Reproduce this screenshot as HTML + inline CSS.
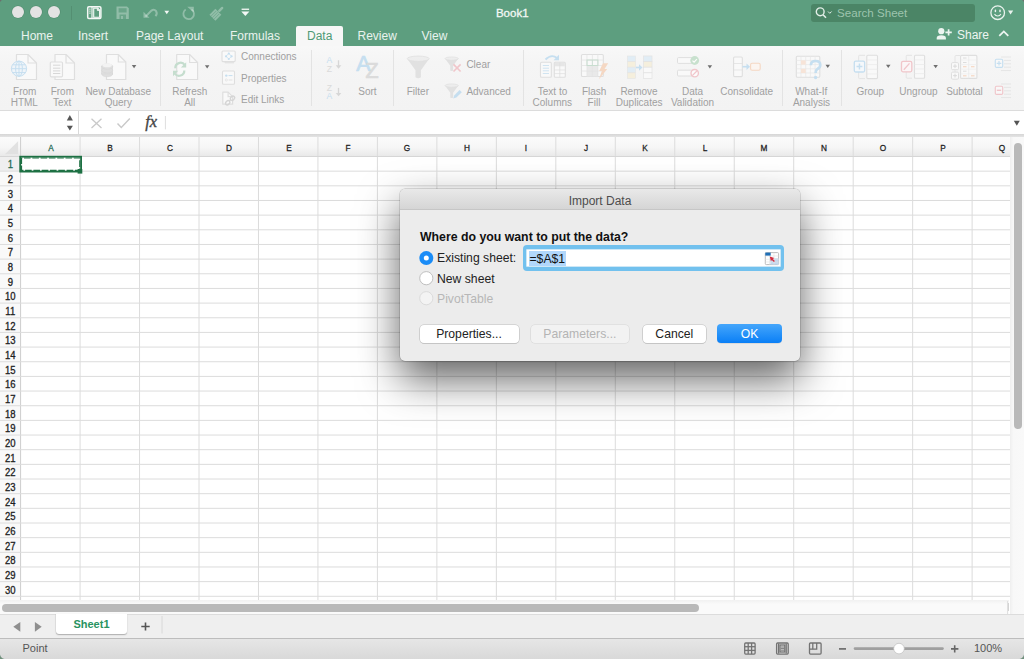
<!DOCTYPE html><html><head><meta charset="utf-8"><style>
*{box-sizing:border-box;margin:0;padding:0}
html,body{width:1024px;height:659px;overflow:hidden;background:#fff;font-family:"Liberation Sans",sans-serif}
.a{position:absolute;white-space:nowrap}
.tab{position:absolute;top:28.5px;font-size:12px;color:#e9f3ee;line-height:14px}
.lbl{position:absolute;font-size:10px;color:#a0a0a0;line-height:11px;text-align:center;white-space:nowrap}
.sep{position:absolute;top:50px;width:1px;height:56px;background:#e2e2e2}
</style></head><body>
<div class="a" style="left:0;top:0;width:1024px;height:46px;background:#5d9e7f"></div>
<svg class="a" style="left:0;top:0" width="1024" height="4"><path d="M0 0H2.2Q0.6 0.6 0 2.2Z" fill="#6d6d6d"/><path d="M1024 0H1021.8Q1023.4 0.6 1024 2.2Z" fill="#6d6d6d"/></svg>
<div class="a" style="left:70.6px;top:6px;width:1px;height:14px;background:#548f72"></div>
<div class="a" style="left:11.5px;top:5.7px;width:12px;height:12px;border-radius:50%;background:#e3e3e3;box-shadow:0 0 0 0.5px #4f8a6c"></div>
<div class="a" style="left:29.5px;top:5.7px;width:12px;height:12px;border-radius:50%;background:#e3e3e3;box-shadow:0 0 0 0.5px #4f8a6c"></div>
<div class="a" style="left:48px;top:5.7px;width:12px;height:12px;border-radius:50%;background:#e3e3e3;box-shadow:0 0 0 0.5px #4f8a6c"></div>
<div class="tab" style="left:21px">Home</div>
<div class="tab" style="left:78px">Insert</div>
<div class="tab" style="left:136px">Page Layout</div>
<div class="tab" style="left:230px">Formulas</div>
<div class="tab" style="left:357.5px">Review</div>
<div class="tab" style="left:421.5px">View</div>
<div class="a" style="left:296px;top:25.5px;width:47px;height:21px;background:#f7f7f7;border-radius:2px 2px 0 0"></div>
<div class="tab" style="left:307px;color:#4f9b76">Data</div>
<div class="a" style="left:0;top:6.3px;width:1024px;padding-left:0.5px;text-align:center;font-size:11.5px;color:#f3f8f5;line-height:14px;-webkit-text-stroke:0.3px #f3f8f5">Book1</div>
<div class="a" style="left:0;top:46px;width:1024px;height:65px;background:linear-gradient(#f8f8f8,#f5f5f5 25%,#f3f3f3);border-bottom:1px solid #dcdcdc"></div>
<svg class="a" style="left:0;top:0;opacity:0.78" width="1024" height="110"><path d="M16.5 54.5H28.0L36.5 63.0V79.5H16.5Z" fill="#fbfbfb" stroke="#d9d9d9" stroke-width="1.2" stroke-linejoin="round"/><path d="M28.0 54.5V63.0H36.5" fill="none" stroke="#d9d9d9" stroke-width="1.2"/><g fill="none" stroke="#b9d9ef" stroke-width="1"><circle cx="19" cy="68.7" r="7.6" fill="#eef5fb"/><ellipse cx="19" cy="68.7" rx="3.4" ry="7.6"/><line x1="19" y1="61" x2="19" y2="76.3"/><line x1="11.4" y1="68.7" x2="26.6" y2="68.7"/><line x1="12.6" y1="64.8" x2="25.4" y2="64.8"/><line x1="12.6" y1="72.6" x2="25.4" y2="72.6"/></g><path d="M55 54.5H66.0L74.5 63.0V79.5H55Z" fill="#fbfbfb" stroke="#d9d9d9" stroke-width="1.2" stroke-linejoin="round"/><path d="M66.0 54.5V63.0H74.5" fill="none" stroke="#d9d9d9" stroke-width="1.2"/><rect x="50.3" y="62" width="12.2" height="14.8" rx="1" fill="#fbfbfb" stroke="#d9d9d9" stroke-width="1.2"/><line x1="53" y1="65.2" x2="60.3" y2="65.2" stroke="#c9c9c9" stroke-width="0.9"/><line x1="53" y1="68.2" x2="60.3" y2="68.2" stroke="#c9c9c9" stroke-width="0.9"/><line x1="53" y1="70.9" x2="60.3" y2="70.9" stroke="#c9c9c9" stroke-width="0.9"/><line x1="53" y1="73.5" x2="60.3" y2="73.5" stroke="#c9c9c9" stroke-width="0.9"/><path d="M106.5 54.5H118.3L125.8 62.0V79.5H106.5Z" fill="#fbfbfb" stroke="#d9d9d9" stroke-width="1.2" stroke-linejoin="round"/><path d="M118.3 54.5V62.0H125.8" fill="none" stroke="#d9d9d9" stroke-width="1.2"/><g fill="#dadada" stroke="#cfcfcf" stroke-width="0.6"><ellipse cx="107.2" cy="74" rx="5.5" ry="2.7"/><rect x="101.7" y="66" width="11" height="8"/><ellipse cx="107.2" cy="70.3" rx="5.5" ry="2.7"/><ellipse cx="107.2" cy="66.6" rx="5.5" ry="2.7"/></g><ellipse cx="107.2" cy="65.2" rx="4.6" ry="2" fill="#f3f3f3"/><path d="M131.8 65h4.5l-2.25 3.2z" fill="#4a4a4a"/><path d="M176.7 54.5H189.6L197.6 62.5V79.5H176.7Z" fill="#fbfbfb" stroke="#d9d9d9" stroke-width="1.2" stroke-linejoin="round"/><path d="M189.6 54.5V62.5H197.6" fill="none" stroke="#d9d9d9" stroke-width="1.2"/><g fill="none" stroke="#b8d7c4" stroke-width="2.2"><path d="M175.3 68.3a5.2 5.2 0 0 1 9.5-3.2"/><path d="M184.3 70.5a5.2 5.2 0 0 1-9.5 3"/></g><path d="M186.2 62.2v5.4h-5.3z" fill="#b8d7c4"/><path d="M173 76.2v-5.4h5.3z" fill="#b8d7c4"/><path d="M204.9 65.3h4.5l-2.25 3.2z" fill="#4a4a4a"/><rect x="222" y="51" width="13.2" height="10.6" rx="1" fill="#fbfbfb" stroke="#d9d9d9" stroke-width="1.1"/><path d="M225 61.6v1.2h9" fill="none" stroke="#d9d9d9" stroke-width="1"/><g fill="#b9d9ef"><circle cx="228.8" cy="53.5" r="1.1"/><circle cx="228.8" cy="59" r="1.1"/><circle cx="226" cy="56.3" r="1.1"/><circle cx="231.6" cy="56.3" r="1.1"/></g><path d="M226 56.3l2.8-2.8 2.8 2.8-2.8 2.7z" fill="none" stroke="#b9d9ef" stroke-width="0.8"/><rect x="222.5" y="71" width="12" height="13.2" rx="1" fill="#fbfbfb" stroke="#d9d9d9" stroke-width="1.1"/><circle cx="226.3" cy="75.6" r="1.2" fill="#b9d9ef"/><line x1="228.5" y1="75.6" x2="232.5" y2="75.6" stroke="#b9d9ef" stroke-width="1"/><circle cx="226.3" cy="80" r="1.1" fill="none" stroke="#dadada" stroke-width="0.7"/><line x1="228.5" y1="80" x2="232.5" y2="80" stroke="#dddddd" stroke-width="1"/><path d="M222.8 92.2H228.1L232.6 96.7V104.2H222.8Z" fill="#fbfbfb" stroke="#d9d9d9" stroke-width="1.2" stroke-linejoin="round"/><path d="M228.1 92.2V96.7H232.6" fill="none" stroke="#d9d9d9" stroke-width="1.2"/><g fill="none" stroke="#cdcdcd" stroke-width="1.3"><ellipse cx="227.7" cy="102.8" rx="2.4" ry="1.8" transform="rotate(-45 227.7 102.8)"/><ellipse cx="232.5" cy="98.2" rx="2.4" ry="1.8" transform="rotate(-45 232.5 98.2)"/><line x1="229" y1="101.4" x2="231" y2="99.5"/></g><text x="326.5" y="63.2" font-size="8.6" fill="#b9d9ef" font-family="Liberation Sans">A</text><text x="326.8" y="71.9" font-size="8.6" fill="#d3d3d3" font-family="Liberation Sans">Z</text><text x="326.8" y="90.8" font-size="8.6" fill="#d3d3d3" font-family="Liberation Sans">Z</text><text x="326.5" y="99.2" font-size="8.6" fill="#b9d9ef" font-family="Liberation Sans">A</text><line x1="338.5" y1="60.3" x2="338.5" y2="67.3" stroke="#cfcfcf" stroke-width="1.3"/><path d="M335.8 65.3h5.5l-2.75 3.4z" fill="#cfcfcf"/><line x1="338.5" y1="87.9" x2="338.5" y2="94.9" stroke="#cfcfcf" stroke-width="1.3"/><path d="M335.8 92.9h5.5l-2.75 3.4z" fill="#cfcfcf"/><text x="356.3" y="71.4" font-size="21.5" fill="#b9d9ef" stroke="#b9d9ef" stroke-width="0.7" font-family="Liberation Sans">A</text><text x="365.6" y="77.6" font-size="21.5" fill="#d4d4d4" stroke="#d4d4d4" stroke-width="0.7" font-family="Liberation Sans">Z</text><path d="M407.2 58.7L415.5 70.2V77.2Q418.2 79.5 420.9 77.2V70.2L429.2 58.7Z" fill="#dcdcdc"/><ellipse cx="418.2" cy="58.7" rx="11" ry="2.6" fill="#ececec" stroke="#dadada" stroke-width="0.8"/><path d="M445 58.6L450.3 65.7V70.5Q451.7 71.5 453.1 70.5V65.7L458.4 58.6Z" fill="#dcdcdc"/><ellipse cx="451.7" cy="58.6" rx="6.7" ry="1.6" fill="#ececec" stroke="#dadada" stroke-width="0.7"/><g stroke="#f0b9bf" stroke-width="1.6"><line x1="453.5" y1="64.4" x2="460.6" y2="71.5"/><line x1="460.6" y1="64.4" x2="453.5" y2="71.5"/></g><path d="M445 85.6L450.3 92.7V97.5Q451.7 98.5 453.1 97.5V92.7L458.4 85.6Z" fill="#dcdcdc"/><ellipse cx="451.7" cy="85.6" rx="6.7" ry="1.6" fill="#ececec" stroke="#dadada" stroke-width="0.7"/><path d="M453.2 98.6l1-3.2 5.4-5.4 2.2 2.2-5.4 5.4z" fill="#b9d9ef"/><rect x="540.5" y="62.3" width="10.8" height="15" rx="1" fill="#fbfbfb" stroke="#d9d9d9" stroke-width="1.1"/><line x1="542.8" y1="65.5" x2="549" y2="65.5" stroke="#b9d9ef" stroke-width="0.8"/><line x1="542.8" y1="68.2" x2="549" y2="68.2" stroke="#b9d9ef" stroke-width="0.8"/><line x1="542.8" y1="70.8" x2="549" y2="70.8" stroke="#b9d9ef" stroke-width="0.8"/><line x1="542.8" y1="73.5" x2="549" y2="73.5" stroke="#b9d9ef" stroke-width="0.8"/><rect x="554.3" y="62.3" width="11" height="15" rx="1" fill="#fbfbfb" stroke="#d9d9d9" stroke-width="1.1"/><rect x="554.8" y="62.8" width="10" height="3.5" fill="#e2e2e2"/><line x1="559.8" y1="62.3" x2="559.8" y2="77.3" stroke="#d9d9d9" stroke-width="0.8"/><line x1="554.3" y1="70" x2="565.3" y2="70" stroke="#d9d9d9" stroke-width="0.7"/><line x1="554.3" y1="73.6" x2="565.3" y2="73.6" stroke="#d9d9d9" stroke-width="0.7"/><path d="M545.5 59.5Q551.5 53.5 557 58" fill="none" stroke="#b9d9ef" stroke-width="1.8"/><path d="M559 54.8V60.3H553.6z" fill="#b9d9ef"/><rect x="581.5" y="54.5" width="21.8" height="22" rx="1" fill="#fbfbfb" stroke="#d9d9d9" stroke-width="1.1"/><rect x="587" y="66" width="11" height="10.5" fill="#e6e6e6"/><line x1="586.95" y1="54.5" x2="586.95" y2="76.5" stroke="#e0e0e0" stroke-width="0.8"/><line x1="581.5" y1="60.00" x2="603.3" y2="60.00" stroke="#e0e0e0" stroke-width="0.8"/><line x1="592.40" y1="54.5" x2="592.40" y2="76.5" stroke="#e0e0e0" stroke-width="0.8"/><line x1="581.5" y1="65.50" x2="603.3" y2="65.50" stroke="#e0e0e0" stroke-width="0.8"/><line x1="597.85" y1="54.5" x2="597.85" y2="76.5" stroke="#e0e0e0" stroke-width="0.8"/><line x1="581.5" y1="71.00" x2="603.3" y2="71.00" stroke="#e0e0e0" stroke-width="0.8"/><rect x="587" y="60" width="10.9" height="5.5" fill="none" stroke="#bcd8c6" stroke-width="1"/><line x1="592.4" y1="60" x2="592.4" y2="65.5" stroke="#bcd8c6" stroke-width="0.8"/><path d="M603 63.2H608.2L604.5 69H607.2L599 79.2L601.8 71H599.2Z" fill="#f6d0b6"/><rect x="627.4" y="56.0" width="8" height="5.6" fill="#dcebf6" stroke="#e0e0e0" stroke-width="0.6"/><rect x="627.4" y="61.6" width="8" height="5.6" fill="#f6eed7" stroke="#e0e0e0" stroke-width="0.6"/><rect x="627.4" y="67.2" width="8" height="5.6" fill="#dcebf6" stroke="#e0e0e0" stroke-width="0.6"/><rect x="627.4" y="72.8" width="8" height="5.6" fill="#f6eed7" stroke="#e0e0e0" stroke-width="0.6"/><rect x="643.5" y="56.0" width="8.5" height="5.6" fill="#dcebf6" stroke="#dedede" stroke-width="0.7"/><rect x="643.5" y="61.6" width="8.5" height="5.6" fill="#f6eed7" stroke="#dedede" stroke-width="0.7"/><rect x="643.5" y="67.2" width="8.5" height="5.6" fill="#fbfbfb" stroke="#dedede" stroke-width="0.7"/><rect x="643.5" y="72.8" width="8.5" height="5.6" fill="#fbfbfb" stroke="#dedede" stroke-width="0.7"/><path d="M636 67.5H639.5" stroke="#b9d9ef" stroke-width="1.6"/><path d="M639 64.2L642.5 67.5L639 70.8Z" fill="#b9d9ef"/><rect x="677.5" y="57.6" width="16.5" height="5.8" rx="1" fill="#fbfbfb" stroke="#d9d9d9" stroke-width="1"/><rect x="677.5" y="70.2" width="16.5" height="5.8" rx="1" fill="#fbfbfb" stroke="#d9d9d9" stroke-width="1"/><circle cx="694.7" cy="60.5" r="4.4" fill="#bcdcc4"/><path d="M692.5 60.6l1.6 1.6 2.8-3" fill="none" stroke="#fff" stroke-width="1.2"/><circle cx="694.7" cy="73.2" r="3.7" fill="#fff" stroke="#f0b9bf" stroke-width="1.4"/><line x1="692.3" y1="75.6" x2="697.1" y2="70.8" stroke="#f0b9bf" stroke-width="1.3"/><path d="M707.6 65.3h4.5l-2.25 3.2z" fill="#4a4a4a"/><rect x="733.6" y="57" width="8.7" height="19.6" rx="1" fill="#fbfbfb" stroke="#d9d9d9" stroke-width="1.1"/><line x1="733.6" y1="63.5" x2="742.3" y2="63.5" stroke="#d9d9d9" stroke-width="0.7"/><line x1="733.6" y1="70" x2="742.3" y2="70" stroke="#d9d9d9" stroke-width="0.7"/><path d="M742.5 66.7H747" stroke="#b9d9ef" stroke-width="1.6"/><path d="M746.5 63.5L750 66.7L746.5 70Z" fill="#b9d9ef"/><rect x="750.6" y="63.3" width="9.6" height="7" rx="1.5" fill="#fdf6f0" stroke="#f6d0b6" stroke-width="1.1"/><rect x="796.3" y="56.2" width="23.5" height="21" rx="1" fill="#fbfbfb" stroke="#d9d9d9" stroke-width="1.1"/><line x1="801.0" y1="56.2" x2="801.0" y2="77.2" stroke="#e4e4e4" stroke-width="0.7"/><line x1="796.3" y1="60.4" x2="819.8" y2="60.4" stroke="#e4e4e4" stroke-width="0.7"/><line x1="805.7" y1="56.2" x2="805.7" y2="77.2" stroke="#e4e4e4" stroke-width="0.7"/><line x1="796.3" y1="64.6" x2="819.8" y2="64.6" stroke="#e4e4e4" stroke-width="0.7"/><line x1="810.4" y1="56.2" x2="810.4" y2="77.2" stroke="#e4e4e4" stroke-width="0.7"/><line x1="796.3" y1="68.8" x2="819.8" y2="68.8" stroke="#e4e4e4" stroke-width="0.7"/><line x1="815.1" y1="56.2" x2="815.1" y2="77.2" stroke="#e4e4e4" stroke-width="0.7"/><line x1="796.3" y1="73.0" x2="819.8" y2="73.0" stroke="#e4e4e4" stroke-width="0.7"/><rect x="801" y="60.4" width="4.7" height="4.2" fill="#f8e0d0"/><rect x="801" y="68.8" width="4.7" height="4.2" fill="#f8e0d0"/><path d="M810.8 65.2Q811 61 815.5 61Q820.3 61 820.3 65Q820.3 67.6 817.4 69Q815.6 70 815.6 73" fill="none" stroke="#b9d9ef" stroke-width="2.6"/><circle cx="815.6" cy="77.5" r="1.7" fill="#b9d9ef"/><path d="M825.5 64.8h4.5l-2.25 3.2z" fill="#4a4a4a"/><path d="M865 55.3H859.5Q858.6 55.3 858.6 56.3V77.6Q858.6 78.6 859.5 78.6H865" fill="none" stroke="#e0e0e0" stroke-width="1"/><rect x="866.8" y="55.3" width="10.7" height="23.3" rx="1" fill="#fbfbfb" stroke="#d9d9d9" stroke-width="1.1"/><line x1="866.8" y1="60.0" x2="877.5" y2="60.0" stroke="#e6e6e6" stroke-width="0.7"/><line x1="866.8" y1="64.6" x2="877.5" y2="64.6" stroke="#e6e6e6" stroke-width="0.7"/><line x1="866.8" y1="69.3" x2="877.5" y2="69.3" stroke="#e6e6e6" stroke-width="0.7"/><line x1="866.8" y1="73.9" x2="877.5" y2="73.9" stroke="#e6e6e6" stroke-width="0.7"/><rect x="854.3" y="61.1" width="10.3" height="10.9" rx="1.5" fill="#f6fafd" stroke="#b9d9ef" stroke-width="1.3"/><path d="M859.45 63.6V69.5M856.5 66.55H862.4" stroke="#b9d9ef" stroke-width="1.5"/><path d="M886 64.8h4.5l-2.25 3.2z" fill="#4a4a4a"/><path d="M912 55.3H907Q906.2 55.3 906.2 56.3V77.2Q906.2 78.2 907 78.2H912" fill="none" stroke="#e0e0e0" stroke-width="1"/><rect x="914.5" y="55.3" width="10.1" height="22.9" rx="1" fill="#fbfbfb" stroke="#d9d9d9" stroke-width="1.1"/><line x1="914.5" y1="59.9" x2="924.6" y2="59.9" stroke="#e6e6e6" stroke-width="0.7"/><line x1="914.5" y1="64.5" x2="924.6" y2="64.5" stroke="#e6e6e6" stroke-width="0.7"/><line x1="914.5" y1="69.0" x2="924.6" y2="69.0" stroke="#e6e6e6" stroke-width="0.7"/><line x1="914.5" y1="73.6" x2="924.6" y2="73.6" stroke="#e6e6e6" stroke-width="0.7"/><rect x="901.5" y="61.4" width="10.3" height="10.4" rx="1.5" fill="#fdf7f8" stroke="#f0b9bf" stroke-width="1.3"/><line x1="903.8" y1="69.8" x2="909.5" y2="63.4" stroke="#f0b9bf" stroke-width="1.3"/><path d="M933.4 65h4.5l-2.25 3.2z" fill="#4a4a4a"/><path d="M960 55.5H956Q955 55.5 955 56.5V62.5M955 70V72" fill="none" stroke="#e0e0e0" stroke-width="1"/><rect x="960.6" y="55.4" width="16.3" height="23" rx="1" fill="#fbfbfb" stroke="#d9d9d9" stroke-width="1.1"/><line x1="968.7" y1="55.4" x2="968.7" y2="78.4" stroke="#e4e4e4" stroke-width="0.7"/><line x1="960.6" y1="60.0" x2="976.9" y2="60.0" stroke="#e8e8e8" stroke-width="0.6"/><line x1="960.6" y1="64.6" x2="976.9" y2="64.6" stroke="#e8e8e8" stroke-width="0.6"/><line x1="960.6" y1="69.2" x2="976.9" y2="69.2" stroke="#e8e8e8" stroke-width="0.6"/><line x1="960.6" y1="73.8" x2="976.9" y2="73.8" stroke="#e8e8e8" stroke-width="0.6"/><line x1="963" y1="58" x2="966.5" y2="58" stroke="#d0d0d0" stroke-width="0.9"/><line x1="963" y1="62.5" x2="966.5" y2="62.5" stroke="#d0d0d0" stroke-width="0.9"/><line x1="963" y1="71.2" x2="966.5" y2="71.2" stroke="#d0d0d0" stroke-width="0.9"/><line x1="963" y1="66.7" x2="966.5" y2="66.7" stroke="#f6d0b6" stroke-width="1.2"/><line x1="971" y1="66.7" x2="974.5" y2="66.7" stroke="#f6d0b6" stroke-width="1.2"/><line x1="963" y1="75.8" x2="966.5" y2="75.8" stroke="#f6d0b6" stroke-width="1.2"/><line x1="971" y1="75.8" x2="974.5" y2="75.8" stroke="#f6d0b6" stroke-width="1.2"/><rect x="951.5" y="62.6" width="7" height="7.1" rx="1.2" fill="#fbfbfb" stroke="#d9d9d9" stroke-width="1"/><path d="M955 64.2V68.1M953.05 66.15H956.95" stroke="#cfcfcf" stroke-width="0.9"/><rect x="951.5" y="72.1" width="7" height="7.1" rx="1.2" fill="#fbfbfb" stroke="#d9d9d9" stroke-width="1"/><path d="M955 73.69999999999999V77.6M953.05 75.64999999999999H956.95" stroke="#cfcfcf" stroke-width="0.9"/><g stroke="#e2e2e2" stroke-width="1"><line x1="1001" y1="57" x2="1011" y2="57"/><line x1="1004" y1="60.4" x2="1011" y2="60.4"/><line x1="1004" y1="63.8" x2="1011" y2="63.8"/><line x1="1004" y1="67.2" x2="1011" y2="67.2"/><line x1="1001" y1="70.6" x2="1011" y2="70.6"/></g><rect x="995.3" y="59.2" width="7.4" height="8.2" rx="1.2" fill="#fafafa" stroke="#b9d9ef" stroke-width="1.1"/><path d="M999 61V65.6M996.7 63.3H1001.3" stroke="#b9d9ef" stroke-width="1.2"/><g stroke="#e2e2e2" stroke-width="1"><line x1="1001" y1="84" x2="1011" y2="84"/><line x1="1004" y1="87.4" x2="1011" y2="87.4"/><line x1="1004" y1="90.8" x2="1011" y2="90.8"/><line x1="1004" y1="94.2" x2="1011" y2="94.2"/><line x1="1001" y1="97.6" x2="1011" y2="97.6"/></g><rect x="995.3" y="86.2" width="7.4" height="8.2" rx="1.2" fill="#fafafa" stroke="#f0b9bf" stroke-width="1.1"/><path d="M996.8 90.3H1001.2" stroke="#f0b9bf" stroke-width="1.4"/></svg>
<svg class="a" style="left:0;top:0" width="1024" height="46"><rect x="87.7" y="6.7" width="13.2" height="11.8" rx="1.2" fill="none" stroke="#f4f8f6" stroke-width="1.5"/><line x1="92" y1="6.7" x2="92" y2="18.5" stroke="#f4f8f6" stroke-width="1.2"/><g fill="#f4f8f6"><rect x="89.2" y="8.6" width="1.4" height="1"/><rect x="89.2" y="10.6" width="1.4" height="1"/><rect x="89.2" y="12.6" width="1.4" height="1"/></g><path d="M93.7 8.1H97.7L99.6 10V17.3H93.7Z" fill="none" stroke="#f4f8f6" stroke-width="1.1"/><path d="M97.3 8.3V10.4H99.4" fill="#f4f8f6" stroke="#f4f8f6" stroke-width="0.8"/><path d="M116.5 6.5H127L128.8 8.3V19H116.5Z" fill="rgba(255,255,255,0.32)"/><rect x="118.6" y="8.2" width="8" height="4.3" fill="#5d9e7f" opacity="0.75"/><rect x="119.5" y="14.5" width="6.5" height="4.5" fill="#5d9e7f" opacity="0.75"/><rect x="121.2" y="16" width="1.6" height="3" fill="rgba(255,255,255,0.32)"/><path d="M145.5 16.6L151.5 10.6Q154 8.6 156 11Q157.7 13.5 155.5 16.2" fill="none" stroke="rgba(255,255,255,0.32)" stroke-width="2"/><path d="M143.5 11.8V17.8H149.5Z" fill="rgba(255,255,255,0.32)"/><path d="M164.4 10.8h4.8l-2.4 3.4z" fill="#f4f8f6"/><path d="M185.7 9.5A5.3 5.3 0 1 0 191.5 9.4" fill="none" stroke="rgba(255,255,255,0.32)" stroke-width="1.8"/><path d="M187.2 6.8H193.8V12.6Z" fill="rgba(255,255,255,0.32)"/><g transform="rotate(45 217 13)"><rect x="215.9" y="4.6" width="2.4" height="6.4" rx="1.1" fill="rgba(255,255,255,0.32)"/><rect x="212.9" y="11.2" width="8.4" height="8.4" fill="rgba(255,255,255,0.32)"/><g stroke="#5d9e7f" stroke-width="0.8" opacity="0.6"><line x1="215" y1="12" x2="215" y2="19.6"/><line x1="217.1" y1="12" x2="217.1" y2="19.6"/><line x1="219.2" y1="12" x2="219.2" y2="19.6"/></g></g><rect x="241.6" y="8.6" width="7.5" height="1.3" fill="#f4f8f6"/><path d="M241.3 11.6h8.1l-4.05 4.4z" fill="#f4f8f6"/></svg>
<div class="a" style="left:160.0px;top:50px;width:1px;height:56px;background:#e3e3e3"></div>
<div class="a" style="left:310.5px;top:50px;width:1px;height:56px;background:#e3e3e3"></div>
<div class="a" style="left:393.3px;top:50px;width:1px;height:56px;background:#e3e3e3"></div>
<div class="a" style="left:523.3px;top:50px;width:1px;height:56px;background:#e3e3e3"></div>
<div class="a" style="left:782.3px;top:50px;width:1px;height:56px;background:#e3e3e3"></div>
<div class="a" style="left:841.1px;top:50px;width:1px;height:56px;background:#e3e3e3"></div>
<div class="lbl" style="left:-15.3px;top:85.6px;width:80px">From</div>
<div class="lbl" style="left:-15.7px;top:96.6px;width:80px">HTML</div>
<div class="lbl" style="left:22.3px;top:85.6px;width:80px">From</div>
<div class="lbl" style="left:22.2px;top:96.6px;width:80px">Text</div>
<div class="lbl" style="left:78.2px;top:85.6px;width:80px">New Database</div>
<div class="lbl" style="left:78.3px;top:96.6px;width:80px">Query</div>
<div class="lbl" style="left:149.8px;top:85.6px;width:80px">Refresh</div>
<div class="lbl" style="left:149.7px;top:96.6px;width:80px">All</div>
<div class="lbl" style="left:327.4px;top:85.6px;width:80px">Sort</div>
<div class="lbl" style="left:377.9px;top:85.6px;width:80px">Filter</div>
<div class="lbl" style="left:512.5px;top:85.6px;width:80px">Text to</div>
<div class="lbl" style="left:512.3px;top:96.6px;width:80px">Columns</div>
<div class="lbl" style="left:554.2px;top:85.6px;width:80px">Flash</div>
<div class="lbl" style="left:554.0px;top:96.6px;width:80px">Fill</div>
<div class="lbl" style="left:599.0px;top:85.6px;width:80px">Remove</div>
<div class="lbl" style="left:599.2px;top:96.6px;width:80px">Duplicates</div>
<div class="lbl" style="left:652.5px;top:85.6px;width:80px">Data</div>
<div class="lbl" style="left:652.5px;top:96.6px;width:80px">Validation</div>
<div class="lbl" style="left:706.7px;top:85.6px;width:80px">Consolidate</div>
<div class="lbl" style="left:771.3px;top:85.6px;width:80px">What-If</div>
<div class="lbl" style="left:771.5px;top:96.6px;width:80px">Analysis</div>
<div class="lbl" style="left:830.3px;top:85.6px;width:80px">Group</div>
<div class="lbl" style="left:878.5px;top:85.6px;width:80px">Ungroup</div>
<div class="lbl" style="left:924.5px;top:85.6px;width:80px">Subtotal</div>
<div class="lbl" style="left:241px;top:51.4px;text-align:left">Connections</div>
<div class="lbl" style="left:241px;top:72.8px;text-align:left">Properties</div>
<div class="lbl" style="left:241px;top:94.3px;text-align:left">Edit Links</div>
<div class="lbl" style="left:466.4px;top:59.2px;text-align:left">Clear</div>
<div class="lbl" style="left:466.4px;top:86.3px;text-align:left">Advanced</div>
<div class="a" style="left:811px;top:4px;width:164px;height:17.5px;border-radius:3px;background:#4b8566"></div>
<svg class="a" style="left:810px;top:3px" width="30" height="20"><circle cx="10.2" cy="8.8" r="3.9" fill="none" stroke="#e3efe8" stroke-width="1.4"/><line x1="13" y1="11.7" x2="16" y2="14.8" stroke="#e3efe8" stroke-width="1.6"/><path d="M18 8.5l1.8 1.8 1.8-1.8" fill="none" stroke="#e3efe8" stroke-width="1"/></svg>
<div class="a" style="left:837px;top:6px;font-size:11.6px;color:#9dc4ae;line-height:14px">Search Sheet</div>
<svg class="a" style="left:985px;top:2px" width="39" height="22"><circle cx="12.7" cy="10.7" r="6.8" fill="none" stroke="#eaf3ee" stroke-width="1.3"/><ellipse cx="10.4" cy="8.9" rx="0.8" ry="1.3" fill="#eaf3ee"/><ellipse cx="15" cy="8.9" rx="0.8" ry="1.3" fill="#eaf3ee"/><path d="M9.5 12a3.6 3.6 0 0 0 6.4 0" fill="none" stroke="#eaf3ee" stroke-width="1.1"/><path d="M23 8.6h5.2l-2.6 4z" fill="#eaf3ee"/></svg>
<svg class="a" style="left:935px;top:26px" width="20" height="16"><circle cx="6.3" cy="5.2" r="3.1" fill="#edf5f1"/><path d="M1.7 13.5V12Q1.7 9.3 6.3 9.3Q10.9 9.3 10.9 12V13.5Z" fill="#edf5f1"/><path d="M13.6 3.2V9.6M10.4 6.4H16.8" stroke="#edf5f1" stroke-width="1.7"/></svg>
<div class="tab" style="left:957px;top:27.7px;color:#edf5f1">Share</div>
<svg class="a" style="left:996px;top:28px" width="16" height="12"><path d="M3.3 7.8L7.8 3.4L12.3 7.8" fill="none" stroke="#edf5f1" stroke-width="1.8"/></svg>
<div class="a" style="left:0;top:111px;width:1024px;height:23px;background:#fff"></div>
<div class="a" style="left:0;top:134px;width:1024px;height:3px;background:linear-gradient(#d6d6d6,#e4e4e4)"></div>
<div class="a" style="left:77.8px;top:111px;width:1px;height:23px;background:#d9d9d9"></div>
<svg class="a" style="left:60px;top:110px" width="120" height="24"><path d="M6.8 10.4L9.85 4.9L12.9 10.4Z" fill="#555"/><path d="M6.8 15.8L9.85 20.6L12.9 15.8Z" fill="#555"/><path d="M31.5 8.7L41.5 18M41.5 8.7L31.5 18" stroke="#c9c9c9" stroke-width="1.3"/><path d="M57.5 13.5L61.3 17.6L69.8 8.6" fill="none" stroke="#c9c9c9" stroke-width="1.4"/><line x1="105.4" y1="6" x2="105.4" y2="19.4" stroke="#dedede" stroke-width="1"/></svg>
<div class="a" style="left:145.2px;top:113.3px;font-family:'Liberation Serif',serif;font-style:italic;font-size:16.5px;color:#444;line-height:18px;-webkit-text-stroke:0.35px #444">fx</div>
<svg class="a" style="left:1008px;top:116px" width="16" height="14"><path d="M5.8 4.7h6l-3 5z" fill="#555"/></svg>
<svg class="a" style="left:0;top:0" width="1024" height="659"><defs><linearGradient id="hg" x1="0" y1="0" x2="0" y2="1"><stop offset="0" stop-color="#fbfbfb"/><stop offset="0.55" stop-color="#f6f6f6"/><stop offset="1" stop-color="#e8e8e8"/></linearGradient></defs><rect x="0" y="137" width="1010" height="19.5" fill="url(#hg)"/><rect x="0" y="156.5" width="20.6" height="443.5" fill="#f9f9f9"/><rect x="0" y="156.5" width="20.6" height="14.66" fill="#efefef"/><path d="M4.9 154.2H18.1V141.3Z" fill="#e1e1e1"/><line x1="20.60" y1="137" x2="20.60" y2="600" stroke="#cdcdcd" stroke-width="1"/><line x1="80.07" y1="137" x2="80.07" y2="600" stroke="#dcdcdc" stroke-width="1"/><line x1="139.54" y1="137" x2="139.54" y2="600" stroke="#dcdcdc" stroke-width="1"/><line x1="199.01" y1="137" x2="199.01" y2="600" stroke="#dcdcdc" stroke-width="1"/><line x1="258.48" y1="137" x2="258.48" y2="600" stroke="#dcdcdc" stroke-width="1"/><line x1="317.95" y1="137" x2="317.95" y2="600" stroke="#dcdcdc" stroke-width="1"/><line x1="377.42" y1="137" x2="377.42" y2="600" stroke="#dcdcdc" stroke-width="1"/><line x1="436.89" y1="137" x2="436.89" y2="600" stroke="#dcdcdc" stroke-width="1"/><line x1="496.36" y1="137" x2="496.36" y2="600" stroke="#dcdcdc" stroke-width="1"/><line x1="555.83" y1="137" x2="555.83" y2="600" stroke="#dcdcdc" stroke-width="1"/><line x1="615.30" y1="137" x2="615.30" y2="600" stroke="#dcdcdc" stroke-width="1"/><line x1="674.77" y1="137" x2="674.77" y2="600" stroke="#dcdcdc" stroke-width="1"/><line x1="734.24" y1="137" x2="734.24" y2="600" stroke="#dcdcdc" stroke-width="1"/><line x1="793.71" y1="137" x2="793.71" y2="600" stroke="#dcdcdc" stroke-width="1"/><line x1="853.18" y1="137" x2="853.18" y2="600" stroke="#dcdcdc" stroke-width="1"/><line x1="912.65" y1="137" x2="912.65" y2="600" stroke="#dcdcdc" stroke-width="1"/><line x1="972.12" y1="137" x2="972.12" y2="600" stroke="#dcdcdc" stroke-width="1"/><line x1="0" y1="156.50" x2="1010" y2="156.50" stroke="#d6d6d6" stroke-width="1"/><line x1="0" y1="171.16" x2="1010" y2="171.16" stroke="#dcdcdc" stroke-width="1"/><line x1="0" y1="185.82" x2="1010" y2="185.82" stroke="#dcdcdc" stroke-width="1"/><line x1="0" y1="200.48" x2="1010" y2="200.48" stroke="#dcdcdc" stroke-width="1"/><line x1="0" y1="215.14" x2="1010" y2="215.14" stroke="#dcdcdc" stroke-width="1"/><line x1="0" y1="229.80" x2="1010" y2="229.80" stroke="#dcdcdc" stroke-width="1"/><line x1="0" y1="244.46" x2="1010" y2="244.46" stroke="#dcdcdc" stroke-width="1"/><line x1="0" y1="259.12" x2="1010" y2="259.12" stroke="#dcdcdc" stroke-width="1"/><line x1="0" y1="273.78" x2="1010" y2="273.78" stroke="#dcdcdc" stroke-width="1"/><line x1="0" y1="288.44" x2="1010" y2="288.44" stroke="#dcdcdc" stroke-width="1"/><line x1="0" y1="303.10" x2="1010" y2="303.10" stroke="#dcdcdc" stroke-width="1"/><line x1="0" y1="317.76" x2="1010" y2="317.76" stroke="#dcdcdc" stroke-width="1"/><line x1="0" y1="332.42" x2="1010" y2="332.42" stroke="#dcdcdc" stroke-width="1"/><line x1="0" y1="347.08" x2="1010" y2="347.08" stroke="#dcdcdc" stroke-width="1"/><line x1="0" y1="361.74" x2="1010" y2="361.74" stroke="#dcdcdc" stroke-width="1"/><line x1="0" y1="376.40" x2="1010" y2="376.40" stroke="#dcdcdc" stroke-width="1"/><line x1="0" y1="391.06" x2="1010" y2="391.06" stroke="#dcdcdc" stroke-width="1"/><line x1="0" y1="405.72" x2="1010" y2="405.72" stroke="#dcdcdc" stroke-width="1"/><line x1="0" y1="420.38" x2="1010" y2="420.38" stroke="#dcdcdc" stroke-width="1"/><line x1="0" y1="435.04" x2="1010" y2="435.04" stroke="#dcdcdc" stroke-width="1"/><line x1="0" y1="449.70" x2="1010" y2="449.70" stroke="#dcdcdc" stroke-width="1"/><line x1="0" y1="464.36" x2="1010" y2="464.36" stroke="#dcdcdc" stroke-width="1"/><line x1="0" y1="479.02" x2="1010" y2="479.02" stroke="#dcdcdc" stroke-width="1"/><line x1="0" y1="493.68" x2="1010" y2="493.68" stroke="#dcdcdc" stroke-width="1"/><line x1="0" y1="508.34" x2="1010" y2="508.34" stroke="#dcdcdc" stroke-width="1"/><line x1="0" y1="523.00" x2="1010" y2="523.00" stroke="#dcdcdc" stroke-width="1"/><line x1="0" y1="537.66" x2="1010" y2="537.66" stroke="#dcdcdc" stroke-width="1"/><line x1="0" y1="552.32" x2="1010" y2="552.32" stroke="#dcdcdc" stroke-width="1"/><line x1="0" y1="566.98" x2="1010" y2="566.98" stroke="#dcdcdc" stroke-width="1"/><line x1="0" y1="581.64" x2="1010" y2="581.64" stroke="#dcdcdc" stroke-width="1"/><line x1="0" y1="596.30" x2="1010" y2="596.30" stroke="#dcdcdc" stroke-width="1"/><rect x="20.2" y="156.7" width="60.9" height="14.9" fill="none" stroke="#1d7043" stroke-width="1.8"/><rect x="21.5" y="158" width="58.3" height="12.3" fill="none" stroke="#1d7043" stroke-width="1.2" stroke-dasharray="6.6 1.7" stroke-dashoffset="-2.5"/><rect x="77.6" y="169" width="4.7" height="4.6" fill="#1d7043"/></svg>
<div class="a" style="left:30.64px;top:141.9px;width:40px;text-align:center;font-size:9.6px;color:#1f6b55;line-height:12px;-webkit-text-stroke:0.3px #1f6b55;transform:scaleX(0.86)">A</div>
<div class="a" style="left:90.10px;top:141.9px;width:40px;text-align:center;font-size:9.6px;color:#1e1e1e;line-height:12px;-webkit-text-stroke:0.3px #1e1e1e;transform:scaleX(0.86)">B</div>
<div class="a" style="left:149.57px;top:141.9px;width:40px;text-align:center;font-size:9.6px;color:#1e1e1e;line-height:12px;-webkit-text-stroke:0.3px #1e1e1e;transform:scaleX(0.86)">C</div>
<div class="a" style="left:209.05px;top:141.9px;width:40px;text-align:center;font-size:9.6px;color:#1e1e1e;line-height:12px;-webkit-text-stroke:0.3px #1e1e1e;transform:scaleX(0.86)">D</div>
<div class="a" style="left:268.52px;top:141.9px;width:40px;text-align:center;font-size:9.6px;color:#1e1e1e;line-height:12px;-webkit-text-stroke:0.3px #1e1e1e;transform:scaleX(0.86)">E</div>
<div class="a" style="left:327.99px;top:141.9px;width:40px;text-align:center;font-size:9.6px;color:#1e1e1e;line-height:12px;-webkit-text-stroke:0.3px #1e1e1e;transform:scaleX(0.86)">F</div>
<div class="a" style="left:387.46px;top:141.9px;width:40px;text-align:center;font-size:9.6px;color:#1e1e1e;line-height:12px;-webkit-text-stroke:0.3px #1e1e1e;transform:scaleX(0.86)">G</div>
<div class="a" style="left:446.93px;top:141.9px;width:40px;text-align:center;font-size:9.6px;color:#1e1e1e;line-height:12px;-webkit-text-stroke:0.3px #1e1e1e;transform:scaleX(0.86)">H</div>
<div class="a" style="left:506.40px;top:141.9px;width:40px;text-align:center;font-size:9.6px;color:#1e1e1e;line-height:12px;-webkit-text-stroke:0.3px #1e1e1e;transform:scaleX(0.86)">I</div>
<div class="a" style="left:565.87px;top:141.9px;width:40px;text-align:center;font-size:9.6px;color:#1e1e1e;line-height:12px;-webkit-text-stroke:0.3px #1e1e1e;transform:scaleX(0.86)">J</div>
<div class="a" style="left:625.34px;top:141.9px;width:40px;text-align:center;font-size:9.6px;color:#1e1e1e;line-height:12px;-webkit-text-stroke:0.3px #1e1e1e;transform:scaleX(0.86)">K</div>
<div class="a" style="left:684.80px;top:141.9px;width:40px;text-align:center;font-size:9.6px;color:#1e1e1e;line-height:12px;-webkit-text-stroke:0.3px #1e1e1e;transform:scaleX(0.86)">L</div>
<div class="a" style="left:744.27px;top:141.9px;width:40px;text-align:center;font-size:9.6px;color:#1e1e1e;line-height:12px;-webkit-text-stroke:0.3px #1e1e1e;transform:scaleX(0.86)">M</div>
<div class="a" style="left:803.75px;top:141.9px;width:40px;text-align:center;font-size:9.6px;color:#1e1e1e;line-height:12px;-webkit-text-stroke:0.3px #1e1e1e;transform:scaleX(0.86)">N</div>
<div class="a" style="left:863.21px;top:141.9px;width:40px;text-align:center;font-size:9.6px;color:#1e1e1e;line-height:12px;-webkit-text-stroke:0.3px #1e1e1e;transform:scaleX(0.86)">O</div>
<div class="a" style="left:922.68px;top:141.9px;width:40px;text-align:center;font-size:9.6px;color:#1e1e1e;line-height:12px;-webkit-text-stroke:0.3px #1e1e1e;transform:scaleX(0.86)">P</div>
<div class="a" style="left:982.15px;top:141.9px;width:40px;text-align:center;font-size:9.6px;color:#1e1e1e;line-height:12px;-webkit-text-stroke:0.3px #1e1e1e;transform:scaleX(0.86)">Q</div>
<div class="a" style="left:0.3px;top:159.43px;width:20.6px;text-align:center;font-size:10px;color:#1f6b55;line-height:12px;-webkit-text-stroke:0.3px #1f6b55;transform:scaleX(0.95)">1</div>
<div class="a" style="left:0.3px;top:174.09px;width:20.6px;text-align:center;font-size:10px;color:#1e1e1e;line-height:12px;-webkit-text-stroke:0.3px #1e1e1e;transform:scaleX(0.95)">2</div>
<div class="a" style="left:0.3px;top:188.75px;width:20.6px;text-align:center;font-size:10px;color:#1e1e1e;line-height:12px;-webkit-text-stroke:0.3px #1e1e1e;transform:scaleX(0.95)">3</div>
<div class="a" style="left:0.3px;top:203.41px;width:20.6px;text-align:center;font-size:10px;color:#1e1e1e;line-height:12px;-webkit-text-stroke:0.3px #1e1e1e;transform:scaleX(0.95)">4</div>
<div class="a" style="left:0.3px;top:218.07px;width:20.6px;text-align:center;font-size:10px;color:#1e1e1e;line-height:12px;-webkit-text-stroke:0.3px #1e1e1e;transform:scaleX(0.95)">5</div>
<div class="a" style="left:0.3px;top:232.73px;width:20.6px;text-align:center;font-size:10px;color:#1e1e1e;line-height:12px;-webkit-text-stroke:0.3px #1e1e1e;transform:scaleX(0.95)">6</div>
<div class="a" style="left:0.3px;top:247.39px;width:20.6px;text-align:center;font-size:10px;color:#1e1e1e;line-height:12px;-webkit-text-stroke:0.3px #1e1e1e;transform:scaleX(0.95)">7</div>
<div class="a" style="left:0.3px;top:262.05px;width:20.6px;text-align:center;font-size:10px;color:#1e1e1e;line-height:12px;-webkit-text-stroke:0.3px #1e1e1e;transform:scaleX(0.95)">8</div>
<div class="a" style="left:0.3px;top:276.71px;width:20.6px;text-align:center;font-size:10px;color:#1e1e1e;line-height:12px;-webkit-text-stroke:0.3px #1e1e1e;transform:scaleX(0.95)">9</div>
<div class="a" style="left:0.3px;top:291.37px;width:20.6px;text-align:center;font-size:10px;color:#1e1e1e;line-height:12px;-webkit-text-stroke:0.3px #1e1e1e;transform:scaleX(0.95)">10</div>
<div class="a" style="left:0.3px;top:306.03px;width:20.6px;text-align:center;font-size:10px;color:#1e1e1e;line-height:12px;-webkit-text-stroke:0.3px #1e1e1e;transform:scaleX(0.95)">11</div>
<div class="a" style="left:0.3px;top:320.69px;width:20.6px;text-align:center;font-size:10px;color:#1e1e1e;line-height:12px;-webkit-text-stroke:0.3px #1e1e1e;transform:scaleX(0.95)">12</div>
<div class="a" style="left:0.3px;top:335.35px;width:20.6px;text-align:center;font-size:10px;color:#1e1e1e;line-height:12px;-webkit-text-stroke:0.3px #1e1e1e;transform:scaleX(0.95)">13</div>
<div class="a" style="left:0.3px;top:350.01px;width:20.6px;text-align:center;font-size:10px;color:#1e1e1e;line-height:12px;-webkit-text-stroke:0.3px #1e1e1e;transform:scaleX(0.95)">14</div>
<div class="a" style="left:0.3px;top:364.67px;width:20.6px;text-align:center;font-size:10px;color:#1e1e1e;line-height:12px;-webkit-text-stroke:0.3px #1e1e1e;transform:scaleX(0.95)">15</div>
<div class="a" style="left:0.3px;top:379.33px;width:20.6px;text-align:center;font-size:10px;color:#1e1e1e;line-height:12px;-webkit-text-stroke:0.3px #1e1e1e;transform:scaleX(0.95)">16</div>
<div class="a" style="left:0.3px;top:393.99px;width:20.6px;text-align:center;font-size:10px;color:#1e1e1e;line-height:12px;-webkit-text-stroke:0.3px #1e1e1e;transform:scaleX(0.95)">17</div>
<div class="a" style="left:0.3px;top:408.65px;width:20.6px;text-align:center;font-size:10px;color:#1e1e1e;line-height:12px;-webkit-text-stroke:0.3px #1e1e1e;transform:scaleX(0.95)">18</div>
<div class="a" style="left:0.3px;top:423.31px;width:20.6px;text-align:center;font-size:10px;color:#1e1e1e;line-height:12px;-webkit-text-stroke:0.3px #1e1e1e;transform:scaleX(0.95)">19</div>
<div class="a" style="left:0.3px;top:437.97px;width:20.6px;text-align:center;font-size:10px;color:#1e1e1e;line-height:12px;-webkit-text-stroke:0.3px #1e1e1e;transform:scaleX(0.95)">20</div>
<div class="a" style="left:0.3px;top:452.63px;width:20.6px;text-align:center;font-size:10px;color:#1e1e1e;line-height:12px;-webkit-text-stroke:0.3px #1e1e1e;transform:scaleX(0.95)">21</div>
<div class="a" style="left:0.3px;top:467.29px;width:20.6px;text-align:center;font-size:10px;color:#1e1e1e;line-height:12px;-webkit-text-stroke:0.3px #1e1e1e;transform:scaleX(0.95)">22</div>
<div class="a" style="left:0.3px;top:481.95px;width:20.6px;text-align:center;font-size:10px;color:#1e1e1e;line-height:12px;-webkit-text-stroke:0.3px #1e1e1e;transform:scaleX(0.95)">23</div>
<div class="a" style="left:0.3px;top:496.61px;width:20.6px;text-align:center;font-size:10px;color:#1e1e1e;line-height:12px;-webkit-text-stroke:0.3px #1e1e1e;transform:scaleX(0.95)">24</div>
<div class="a" style="left:0.3px;top:511.27px;width:20.6px;text-align:center;font-size:10px;color:#1e1e1e;line-height:12px;-webkit-text-stroke:0.3px #1e1e1e;transform:scaleX(0.95)">25</div>
<div class="a" style="left:0.3px;top:525.93px;width:20.6px;text-align:center;font-size:10px;color:#1e1e1e;line-height:12px;-webkit-text-stroke:0.3px #1e1e1e;transform:scaleX(0.95)">26</div>
<div class="a" style="left:0.3px;top:540.59px;width:20.6px;text-align:center;font-size:10px;color:#1e1e1e;line-height:12px;-webkit-text-stroke:0.3px #1e1e1e;transform:scaleX(0.95)">27</div>
<div class="a" style="left:0.3px;top:555.25px;width:20.6px;text-align:center;font-size:10px;color:#1e1e1e;line-height:12px;-webkit-text-stroke:0.3px #1e1e1e;transform:scaleX(0.95)">28</div>
<div class="a" style="left:0.3px;top:569.91px;width:20.6px;text-align:center;font-size:10px;color:#1e1e1e;line-height:12px;-webkit-text-stroke:0.3px #1e1e1e;transform:scaleX(0.95)">29</div>
<div class="a" style="left:0.3px;top:584.57px;width:20.6px;text-align:center;font-size:10px;color:#1e1e1e;line-height:12px;-webkit-text-stroke:0.3px #1e1e1e;transform:scaleX(0.95)">30</div>
<div class="a" style="left:0;top:600px;width:1010px;height:14px;background:linear-gradient(#f1f1f1,#fafafa 30%,#fafafa)"></div>
<div class="a" style="left:1006.8px;top:600.5px;width:1.6px;height:13.5px;background:#e0e0e0"></div>
<div class="a" style="left:1007.6px;top:603px;width:1.3px;height:8px;background:#d4d4d4"></div>
<div class="a" style="left:1008.5px;top:600px;width:1.5px;height:14px;background:#fff"></div>
<div class="a" style="left:2px;top:604.2px;width:697px;height:7.8px;border-radius:4px;background:#b9b9b9"></div>
<div class="a" style="left:1010px;top:137px;width:14px;height:477px;background:linear-gradient(90deg,#efefef,#f8f8f8 25%,#f9f9f9)"></div>
<div class="a" style="left:1014px;top:142.5px;width:8px;height:286.5px;border-radius:4px;background:#b9b9b9"></div>
<div class="a" style="left:0;top:614px;width:1024px;height:24px;background:#efefef;border-top:1px solid #dcdcdc"></div>
<div class="a" style="left:55.7px;top:614px;width:71.6px;height:19.8px;background:#fff;border-radius:0 0 3px 3px;box-shadow:0 1px 1.2px rgba(0,0,0,.28),-0.5px 0 0.5px rgba(0,0,0,.08)"></div>
<div class="a" style="left:55.7px;top:617.5px;width:71.6px;text-align:center;font-size:11px;font-weight:bold;color:#28935f;line-height:13px">Sheet1</div>
<div class="a" style="left:0;top:638px;width:1024px;height:21px;background:linear-gradient(#e6e6e6,#d9d9d9);border-top:1px solid #bdbdbd"></div>
<div class="a" style="left:22.5px;top:642px;font-size:11px;color:#555;line-height:13px">Point</div>
<div class="a" style="left:974px;top:642px;font-size:11px;color:#555;line-height:13px">100%</div>
<svg class="a" style="left:0;top:614px" width="170" height="24"><path d="M20.3 7.9V17.7L13.3 12.8Z" fill="#8f8f8f"/><path d="M34.9 7.9V17.7L41.7 12.8Z" fill="#8f8f8f"/><path d="M145.5 8.5V16.5M141.3 12.5H149.7" stroke="#555" stroke-width="1.6"/><line x1="162" y1="2" x2="162" y2="19.5" stroke="#d8d8d8" stroke-width="1"/></svg>
<svg class="a" style="left:740px;top:638px" width="284" height="21"><g fill="none" stroke="#737373" stroke-width="1.3"><rect x="4.7" y="5" width="10.4" height="11.1" rx="1"/><line x1="8.2" y1="5" x2="8.2" y2="16.1"/><line x1="11.6" y1="5" x2="11.6" y2="16.1"/><line x1="4.7" y1="8.7" x2="15.1" y2="8.7"/><line x1="4.7" y1="12.4" x2="15.1" y2="12.4"/></g><g fill="none" stroke="#737373" stroke-width="1.3"><rect x="36.6" y="5" width="11.6" height="11.1" rx="1"/><line x1="38.6" y1="5.5" x2="38.6" y2="15.6"/><line x1="46.2" y1="5.5" x2="46.2" y2="15.6"/><rect x="40" y="7" width="4.8" height="7"/></g><g stroke="#737373" stroke-width="0.9"><line x1="40.8" y1="9" x2="44" y2="9"/><line x1="40.8" y1="10.6" x2="44" y2="10.6"/><line x1="40.8" y1="12.2" x2="44" y2="12.2"/></g><g fill="none" stroke="#737373" stroke-width="1.3"><rect x="69.5" y="5" width="11.6" height="11.1" rx="1"/><path d="M69.5 11.2H76.7V5"/><line x1="72.8" y1="5" x2="72.8" y2="11.2"/></g><path d="M99 10.9H106" stroke="#666" stroke-width="1.6"/><line x1="115" y1="10.6" x2="202.5" y2="10.6" stroke="#9f9f9f" stroke-width="2.6" stroke-linecap="round"/><circle cx="159" cy="10.6" r="5.3" fill="#fff" stroke="#bdbdbd" stroke-width="0.7"/><path d="M211 10.9H218.4M214.7 7.2V14.6" stroke="#666" stroke-width="1.6"/></svg>
<div class="a" style="left:400.2px;top:189.1px;width:399.8px;height:172.2px;border-radius:5px;background:#ececec;box-shadow:0 18px 42px rgba(0,0,0,.62),0 0 0 0.5px rgba(0,0,0,.22)"></div>
<div class="a" style="left:400px;top:189px;width:400px;height:20.8px;border-radius:5px 5px 0 0;background:linear-gradient(#e9e9e9,#d5d5d5);border-bottom:1px solid #c6c6c6"></div>
<div class="a" style="left:400px;top:193.5px;width:400px;text-align:center;font-size:12px;color:#4d4d4d;line-height:14px">Import Data</div>
<div class="a" style="left:420px;top:230px;font-size:12.3px;font-weight:bold;color:#111;line-height:14px">Where do you want to put the data?</div>
<svg class="a" style="left:410px;top:245px" width="30" height="70"><circle cx="16.3" cy="13.1" r="7" fill="#1a8cf7"/><circle cx="16.3" cy="13.1" r="2.5" fill="#fff"/><circle cx="16.3" cy="33.2" r="6.6" fill="#fff" stroke="#b9b9b9" stroke-width="0.9"/><circle cx="16.3" cy="53.2" r="6.6" fill="#f3f3f3" stroke="#d8d8d8" stroke-width="0.9"/></svg>
<div class="a" style="left:437px;top:251.2px;font-size:12.2px;color:#222;line-height:14px">Existing sheet:</div>
<div class="a" style="left:437px;top:271.8px;font-size:12.2px;color:#222;line-height:14px">New sheet</div>
<div class="a" style="left:437px;top:291.8px;font-size:12.2px;color:#b7b7b7;line-height:14px">PivotTable</div>
<div class="a" style="left:522.8px;top:245.4px;width:261px;height:25.2px;border-radius:4px;background:#72c1ee"></div>
<div class="a" style="left:526.2px;top:248.9px;width:254.4px;height:18.2px;background:#fff;box-shadow:inset 0 0 0 0.5px #9ccfee"></div>
<div class="a" style="left:529px;top:251px;width:36.7px;height:14.8px;background:#b1d7fb"></div>
<div class="a" style="left:529.5px;top:251.5px;font-size:12.2px;color:#111;line-height:14px">=$A$1</div>
<svg class="a" style="left:764px;top:251px" width="16" height="16"><rect x="1.3" y="1.6" width="13.3" height="12" rx="1" fill="#fff" stroke="#b3b3b3" stroke-width="0.9"/><path d="M6.3 7.3H14.6V13.6H6.3Z" fill="#c3d8ee"/><g stroke="#e3e3e3" stroke-width="0.6"><line x1="1.3" y1="5" x2="14.6" y2="5"/><line x1="1.3" y1="8.3" x2="14.6" y2="8.3"/><line x1="1.3" y1="11" x2="14.6" y2="11"/><line x1="5.5" y1="1.6" x2="5.5" y2="13.6"/><line x1="10" y1="1.6" x2="10" y2="13.6"/></g><rect x="1.3" y="1.6" width="5.4" height="3" fill="#1f6fb6"/><path d="M5.8 5.6L10.3 6.9L8.8 7.9L10.9 10L9.9 11L7.8 8.9L6.9 10.3Z" fill="#d42a3c"/></svg>
<div class="a" style="left:419.5px;top:324.6px;width:99.0px;height:18px;border-radius:4px;background:#fff;box-shadow:0 0 0 0.6px #bdbdbd,0 0.8px 0.6px rgba(0,0,0,.18)"></div>
<div class="a" style="left:419.5px;top:327px;width:99.0px;text-align:center;font-size:12.2px;color:#222;line-height:14px">Properties...</div>
<div class="a" style="left:530.7px;top:324.6px;width:98.29999999999995px;height:18px;border-radius:4px;background:#f2f2f2;box-shadow:0 0 0 0.6px #d6d6d6"></div>
<div class="a" style="left:530.7px;top:327px;width:98.29999999999995px;text-align:center;font-size:12.2px;color:#b4b4b4;line-height:14px">Parameters...</div>
<div class="a" style="left:642.7px;top:324.6px;width:63.299999999999955px;height:18px;border-radius:4px;background:#fff;box-shadow:0 0 0 0.6px #bdbdbd,0 0.8px 0.6px rgba(0,0,0,.18)"></div>
<div class="a" style="left:642.7px;top:327px;width:63.299999999999955px;text-align:center;font-size:12.2px;color:#222;line-height:14px">Cancel</div>
<div class="a" style="left:717.3px;top:324.3px;width:64.5px;height:18.5px;border-radius:4px;background:linear-gradient(#45a6fb,#0a7ff6);box-shadow:0 0.5px 0.5px rgba(0,0,0,.15)"></div>
<div class="a" style="left:717.3px;top:327px;width:64.5px;text-align:center;font-size:12.2px;color:#fff;line-height:14px">OK</div>
<svg class="a" style="left:0;top:653px" width="1024" height="6"><path d="M0 1.5Q0.8 5.2 4.5 6H0Z" fill="#6f8f7c"/><path d="M1024 1.5Q1023.2 5.2 1019.5 6H1024Z" fill="#6f8f7c"/></svg>
</body></html>
